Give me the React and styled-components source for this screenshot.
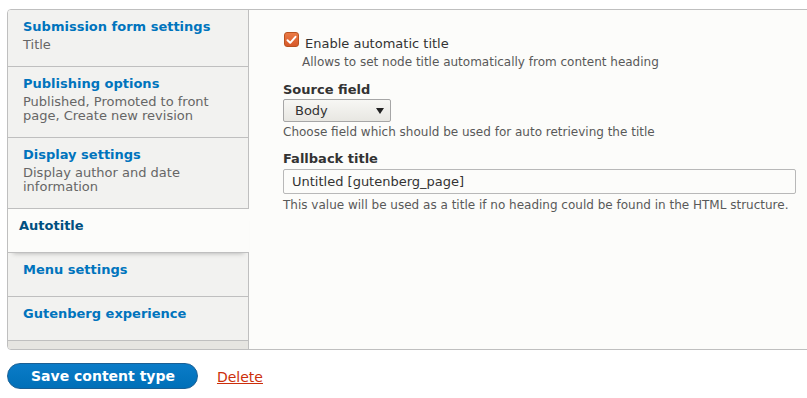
import React from "react";
import styled, { createGlobalStyle } from "styled-components";

const GlobalStyle = createGlobalStyle`
  html, body { margin: 0; padding: 0; background: #fff; overflow: hidden; }
  body { font-family: "DejaVu Sans", Verdana, sans-serif; color: #333; }
  * { box-sizing: border-box; }
`;

const Page = styled.div`
  padding: 9px 0 0 7px;
  width: 830px;
`;

const Box = styled.div`
  display: flex;
  width: 810px;
  border: 1px solid #bfbfbf;
  border-radius: 4px;
  overflow: hidden;
`;

const TabList = styled.ul`
  list-style: none;
  margin: 0;
  padding: 0;
  width: 241px;
  flex-shrink: 0;
  display: flex;
  flex-direction: column;
`;

const Tab = styled.li`
  position: relative;
  z-index: ${(p) => (p.$selected ? 1 : 0)};
  padding: 5px 15px ${(p) => (p.$hasSummary ? "14px" : "15px")}
    ${(p) => (p.$selected ? "11px" : "15px")};
  background: ${(p) => (p.$selected ? "#fcfcfa" : "#f2f2f0")};
  border-bottom: 1px solid #bfbfbf;
  border-right: ${(p) => (p.$selected ? "none" : "1px solid #bfbfbf")};
  box-shadow: ${(p) =>
    p.$selected ? "0 5px 5px -5px rgba(0,0,0,0.3)" : "none"};
`;

const TabTitle = styled.div`
  font-size: 13px;
  font-weight: bold;
  line-height: 23px;
  color: ${(p) => (p.$selected ? "#004f80" : "#0074bd")};
`;

const TabSummary = styled.div`
  font-size: 13px;
  line-height: 14px;
  color: #666;
`;

const Filler = styled.li`
  flex: 1;
  min-height: 8px;
  background: #e6e5e1;
  border-right: 1px solid #bfbfbf;
`;

const Panel = styled.div`
  flex: 1;
  background: #fcfcfa;
  padding: 22px 20px 10px 34px;
`;

const CheckRow = styled.label`
  display: flex;
  align-items: flex-start;
  gap: 6px;
  margin-left: 1px;
`;

const CheckBox = styled.span`
  width: 15px;
  height: 15px;
  flex-shrink: 0;
  border-radius: 3px;
  border: 1px solid #b9521f;
  background: linear-gradient(#ea7a45, #d7592a);
  display: flex;
  align-items: center;
  justify-content: center;
`;

const CheckLabel = styled.span`
  font-size: 13px;
  line-height: 18px;
  margin-top: 3px;
  color: #333;
`;

const Description = styled.div`
  font-size: 12px;
  line-height: 16px;
  color: #595959;
  margin-top: ${(p) => p.$top || 0}px;
  margin-left: ${(p) => p.$indent || 0}px;
`;

const FieldLabel = styled.div`
  font-size: 13px;
  font-weight: bold;
  line-height: 18px;
  color: #333;
  margin-top: ${(p) => p.$top || 0}px;
`;

const Select = styled.div`
  display: flex;
  align-items: center;
  justify-content: space-between;
  width: 108px;
  height: 23px;
  border: 1px solid #a6a6a6;
  border-radius: 2px;
  background: linear-gradient(#f7f7f4, #e8e7e2);
  padding: 0 6px 0 11px;
  font-size: 13px;
  color: #333;
`;

const Arrow = styled.span`
  width: 0;
  height: 0;
  border-left: 4px solid transparent;
  border-right: 4px solid transparent;
  border-top: 6px solid #222;
`;

const TextInput = styled.div`
  display: flex;
  align-items: center;
  height: 25px;
  margin-top: 1px;
  border: 1px solid #b8b8b8;
  border-radius: 2px;
  background: #fcfcfa;
  padding: 0 8px;
  font-size: 13px;
  color: #333;
`;

const Actions = styled.div`
  display: flex;
  align-items: center;
  gap: 19px;
  margin-top: 13px;
`;

const PrimaryButton = styled.button`
  height: 26px;
  padding: 0 22px 0 23px;
  border: 1px solid #1a5f94;
  border-radius: 20px;
  background: linear-gradient(#0a7cc8, #0070b8);
  color: #fff;
  font-family: "DejaVu Sans", Verdana, sans-serif;
  font-size: 14px;
  font-weight: bold;
  line-height: 24px;
`;

const DangerLink = styled.a`
  font-size: 14px;
  color: #cc2e0a;
  text-decoration: underline;
  margin-top: 1px;
`;

const tabs = [
  { title: "Submission form settings", summary: ["Title"] },
  { title: "Publishing options", summary: ["Published, Promoted to front", "page, Create new revision"] },
  { title: "Display settings", summary: ["Display author and date", "information"] },
  { title: "Autotitle", selected: true },
  { title: "Menu settings" },
  { title: "Gutenberg experience" },
];

export default function App() {
  return (
    <Page>
      <GlobalStyle />
      <Box>
        <TabList>
          {tabs.map((t) => (
            <Tab key={t.title} $selected={t.selected} $hasSummary={!!t.summary}>
              <TabTitle $selected={t.selected}>{t.title}</TabTitle>
              {t.summary &&
                t.summary.map((line) => <TabSummary key={line}>{line}</TabSummary>)}
            </Tab>
          ))}
          <Filler />
        </TabList>
        <Panel>
          <CheckRow>
            <CheckBox>
              <svg width="11" height="10" viewBox="0 0 11 10">
                <path d="M1.5 5.2 L4.2 7.8 L9.5 1.8" fill="none" stroke="#fff" strokeWidth="2" strokeLinecap="round" strokeLinejoin="round" />
              </svg>
            </CheckBox>
            <CheckLabel>Enable automatic title</CheckLabel>
          </CheckRow>
          <Description $top={1} $indent={19}>
            Allows to set node title automatically from content heading
          </Description>

          <FieldLabel $top={11}>Source field</FieldLabel>
          <Select>
            <span>Body</span>
            <Arrow />
          </Select>
          <Description $top={2}>
            Choose field which should be used for auto retrieving the title
          </Description>

          <FieldLabel $top={10}>Fallback title</FieldLabel>
          <TextInput>Untitled [gutenberg_page]</TextInput>
          <Description $top={3}>
            This value will be used as a title if no heading could be found in the HTML structure.
          </Description>
        </Panel>
      </Box>
      <Actions>
        <PrimaryButton>Save content type</PrimaryButton>
        <DangerLink href="#">Delete</DangerLink>
      </Actions>
    </Page>
  );
}
